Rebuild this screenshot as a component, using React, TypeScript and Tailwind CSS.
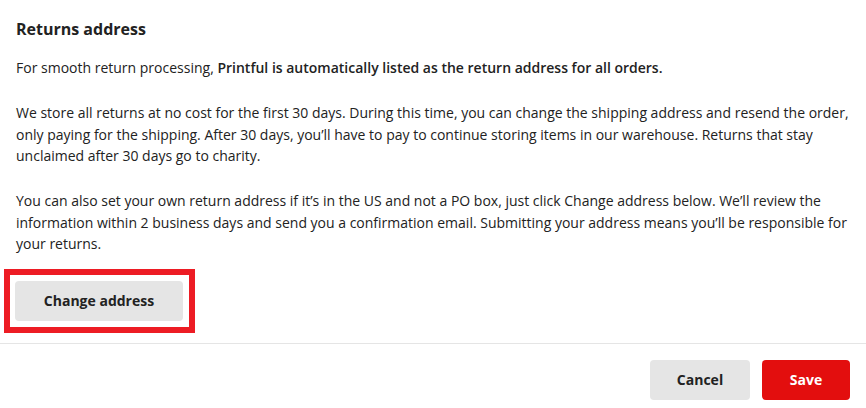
export default function App() {
  return (
    <div className="w-[866px] h-[408px] bg-white text-[#222222] font-['Open_Sans','Liberation_Sans',sans-serif] flex flex-col">
      <div className="px-4 pt-[18px]">
        <h2 className="text-[16px] leading-[22px] font-bold">Returns address</h2>
        <p className="mt-[17px] text-[14px] leading-[21.5px]">
          For smooth return processing, <strong className="font-semibold">Printful is automatically listed as the return address for all orders.</strong>
        </p>
        <p className="mt-[23.5px] text-[14px] leading-[21.5px] whitespace-nowrap">
          We store all returns at no cost for the first 30 days. During this time, you can change the shipping address and resend the order,
          <br />
          only paying for the shipping. After 30 days, you’ll have to pay to continue storing items in our warehouse. Returns that stay
          <br />
          unclaimed after 30 days go to charity.
        </p>
        <p className="mt-[23.5px] text-[14px] leading-[21.5px] whitespace-nowrap">
          You can also set your own return address if it’s in the US and not a PO box, just click Change address below. We’ll review the
          <br />
          information within 2 business days and send you a confirmation email. Submitting your address means you’ll be responsible for
          <br />
          your returns.
        </p>
        <div className="mt-[14px] -ml-3 w-fit border-[6px] border-[#ed1c24] py-[6px] pl-[5px] pr-[6px]">
          <button className="w-[168px] h-[40px] rounded bg-[#e5e5e5] text-[14px] font-bold">Change address</button>
        </div>
      </div>
      <div className="mt-[10px] border-t border-[#e5e5e5] flex justify-end gap-3 px-4 pt-4">
        <button className="w-[100px] h-[40px] rounded bg-[#e5e5e5] text-[14px] font-bold">Cancel</button>
        <button className="w-[88px] h-[40px] rounded bg-[#e30e0e] text-white text-[14px] font-bold">Save</button>
      </div>
    </div>
  );
}
